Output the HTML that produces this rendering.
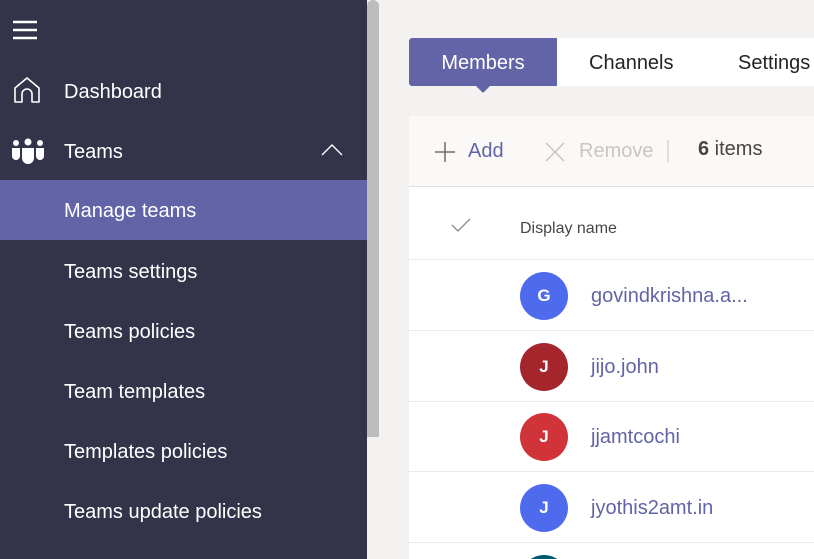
<!DOCTYPE html>
<html style="width:814px;height:559px;overflow:hidden"><head><style>
*{margin:0;padding:0;box-sizing:border-box}
body{width:814px;height:559px;overflow:hidden;background:#f3f2f1;font-family:"Segoe UI","Liberation Sans",sans-serif;position:relative}
.side{position:absolute;left:0;top:0;width:367px;height:559px;background:#33344a}
.sb{position:absolute;left:367px;top:0;width:12px;height:437px;background:#bdbdbd;border-radius:6px 6px 0 0}
.it{position:absolute;left:0;width:367px;height:60px;color:#fff;font-size:20px;line-height:62px;padding-left:64px}
.sel{background:#6264a7}
.tabs{position:absolute;left:409px;top:38px;width:405px;height:48px;background:#fff}
.tab{position:absolute;top:0;height:48px;line-height:50px;font-size:20px;color:#252423}
.card{position:absolute;left:409px;top:116px;width:405px;height:443px;background:#fff;border-radius:3px 0 0 0;overflow:hidden}
.tb{height:71px;background:#faf9f8;border-bottom:1px solid #e1dfdd;position:relative}
.row{position:absolute;left:0;width:405px;border-bottom:1px solid #edebe9}
.av{position:absolute;left:111px;width:48px;height:48px;border-radius:50%;color:#fff;font-weight:bold;font-size:17px;text-align:center;line-height:48px}
.nm{position:absolute;left:182px;font-size:20px;color:#6264a7}
</style></head><body>
<div class="side">
<svg style="position:absolute;left:13px;top:20px" width="24" height="20"><g stroke="#fff" stroke-width="2.5"><line x1="0" y1="2" x2="24" y2="2"/><line x1="0" y1="10" x2="24" y2="10"/><line x1="0" y1="18" x2="24" y2="18"/></g></svg>
<svg style="position:absolute;left:13px;top:76px" width="28" height="28" viewBox="0 0 28 28"><path d="M2 26V12L14 2 26 12V26H19V18a5 5 0 0 0-10 0V26Z" fill="none" stroke="#fff" stroke-width="1.6" stroke-linejoin="round"/></svg>
<svg style="position:absolute;left:12px;top:138px" width="32" height="26" viewBox="0 0 32 26"><g fill="#fff"><circle cx="4" cy="5" r="3"/><circle cx="16" cy="4" r="3.5"/><circle cx="28" cy="5" r="3"/><path d="M0 10h8v8a4 4 0 0 1-8 0z"/><path d="M24 10h8v8a4 4 0 0 1-8 0z"/><path d="M10 10h12v10a6 6 0 0 1-12 0z"/></g></svg>
<div class="it" style="top:61px">Dashboard</div>
<div class="it" style="top:121px">Teams</div>
<svg style="position:absolute;left:321px;top:144px" width="22" height="12"><path d="M1 11L11 1 21 11" fill="none" stroke="#fff" stroke-width="1.4"/></svg>
<div class="it sel" style="top:180px">Manage teams</div>
<div class="it" style="top:241px">Teams settings</div>
<div class="it" style="top:301px">Teams policies</div>
<div class="it" style="top:361px">Team templates</div>
<div class="it" style="top:421px">Templates policies</div>
<div class="it" style="top:481px">Teams update policies</div>
</div>
<div class="sb"></div>
<div class="tabs">
<div class="tab" style="left:0;width:148px;background:#6264a7;color:#fff;text-align:center;border-radius:3px 0 0 3px">Members</div>
<div class="tab" style="left:180px">Channels</div>
<div class="tab" style="left:329px">Settings</div>
</div>
<svg style="position:absolute;left:475px;top:85px" width="16" height="8"><path d="M0 0H16L9 7Q8 8 7 7Z" fill="#6264a7"/></svg>
<div class="card">
<div class="tb">
<svg style="position:absolute;left:26px;top:26px" width="20" height="20"><g stroke="#6e6d6c" stroke-width="1.5"><line x1="10" y1="0" x2="10" y2="20"/><line x1="0" y1="10" x2="20" y2="10"/></g></svg>
<div style="position:absolute;left:59px;top:24px;font-size:20px;color:#6264a7">Add</div>
<svg style="position:absolute;left:136px;top:26px" width="20" height="20"><g stroke="#c8c6c4" stroke-width="1.5"><line x1="1" y1="1" x2="19" y2="19"/><line x1="19" y1="1" x2="1" y2="19"/></g></svg>
<div style="position:absolute;left:170px;top:24px;font-size:20px;color:#c8c6c4">Remove</div>
<div style="position:absolute;left:258px;top:24px;width:2px;height:22px;background:#e1dfdd"></div>
<div style="position:absolute;left:289px;top:22px;font-size:20px;color:#484644"><b>6</b> items</div>
</div>
<svg style="position:absolute;left:42px;top:102px" width="20" height="14"><path d="M1 7l6 6L19 1" fill="none" stroke="#8a8886" stroke-width="1.3"/></svg>
<div style="position:absolute;left:111px;top:104px;font-size:16px;color:#484644">Display name</div>
<div class="row" style="top:72px;height:72px"></div>
<div class="row" style="top:144px;height:71px"></div>
<div class="row" style="top:215px;height:71px"></div>
<div class="row" style="top:286px;height:70px"></div>
<div class="row" style="top:356px;height:71px"></div>
<div class="av" style="top:156px;background:#4f6bed">G</div><div class="nm" style="top:169px">govindkrishna.a...</div>
<div class="av" style="top:227px;background:#a4262c">J</div><div class="nm" style="top:240px">jijo.john</div>
<div class="av" style="top:297px;background:#d13438">J</div><div class="nm" style="top:310px">jjamtcochi</div>
<div class="av" style="top:368px;background:#4f6bed">J</div><div class="nm" style="top:381px">jyothis2amt.in</div>
<div class="av" style="top:439px;background:#005b70"></div>
</div>
</body></html>
